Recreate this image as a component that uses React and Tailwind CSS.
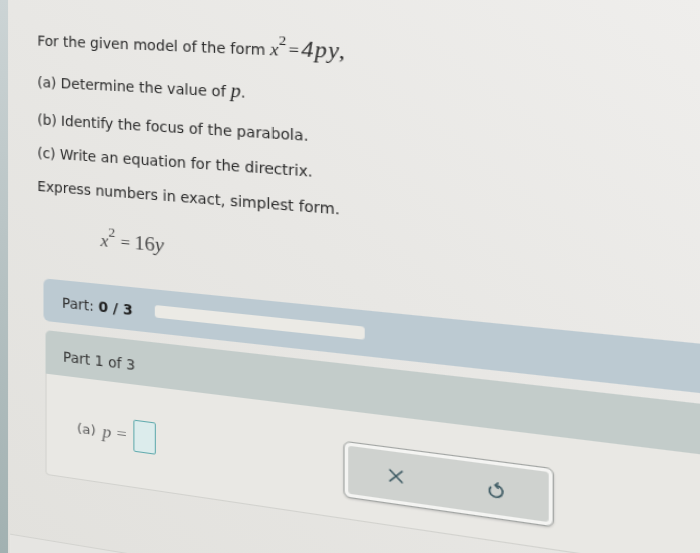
import React from 'react';

const sans = "font-['DejaVu_Sans',Verdana,sans-serif]";
const serif = "font-['Liberation_Serif','Times_New_Roman',serif]";

function UndoIcon() {
  return (
    <svg width="18" height="18" viewBox="0 0 20 20" fill="none" stroke="#3d5a63" strokeWidth="1.7" strokeLinecap="round" strokeLinejoin="round">
      <path d="M9.5 5.5 A5.8 5.8 0 1 1 5 8" />
      <path d="M11.5 3 L9 5.5 L11.5 8" />
    </svg>
  );
}

function CloseIcon() {
  return (
    <svg width="14" height="14" viewBox="0 0 14 14" fill="none" stroke="#3d5a63" strokeWidth="1.5" strokeLinecap="round">
      <path d="M2 2 L12 12 M12 2 L2 12" />
    </svg>
  );
}

export default function App() {
  return (
    <div className="w-[700px] h-[553px] overflow-hidden bg-gradient-to-bl from-[#efeeec] via-[#e8e7e4] to-[#e2e1dd]">
      <div className="w-[640px] h-[600px] flex origin-top-left [transform:matrix3d(1,0.0303,0,-0.0002525,0,1,0,0,0,0,1,0,0,0,0,1)]">
        {/* screen edge */}
        <div className="w-[8px] shrink-0 bg-gradient-to-b from-[#ccd4d5] via-[#b4c0c1] to-[#9eaeae]" />

        <div className="flex-1 flex flex-col">
          {/* question text */}
          <div className={`ml-[29px] pt-[27px] text-[13.3px] text-[#2a2a2a] ${sans}`}>
            <div className="h-[20px] flex items-baseline leading-[20px] whitespace-nowrap">
              <span>For the given model of the form&nbsp;</span>
              <span className={`${serif} italic text-[17px] leading-none`}>x</span>
              <span className={`${serif} text-[13px] leading-none relative -top-[10px]`}>2</span>
              <span className={`${serif} text-[16px] leading-none ml-[2px]`}>=</span>
              <span className={`${serif} italic text-[21px] leading-none ml-[2px] tracking-[1px]`}>4py,</span>
            </div>
            <div className="mt-[23px] h-[20px] flex items-baseline leading-[20px] whitespace-nowrap">
              <span>(a) Determine the value of&nbsp;</span>
              <span className={`${serif} italic text-[18px] leading-none`}>p</span>
              <span>.</span>
            </div>
            <div className="mt-[18px] h-[20px] leading-[20px] whitespace-nowrap">(b) Identify the focus of the parabola.</div>
            <div className="mt-[13px] h-[20px] leading-[20px] whitespace-nowrap">(c) Write an equation for the directrix.</div>
            <div className="mt-[13px] h-[20px] leading-[20px] whitespace-nowrap">Express numbers in exact, simplest form.</div>
            <div className={`mt-[27px] pl-[61px] h-[20px] flex items-baseline whitespace-nowrap text-[#4a4a4a] ${serif}`}>
              <span className="italic text-[17px] leading-none">x</span>
              <span className="text-[13px] leading-none relative -top-[10px]">2</span>
              <span className="text-[16px] leading-none ml-[5px]">=</span>
              <span className="text-[19px] leading-none ml-[4px]">16</span>
              <span className="italic text-[19px] leading-none">y</span>
            </div>
          </div>

          {/* progress bar */}
          <div className={`mt-[33px] ml-[34.5px] h-[42px] rounded-l-[6px] bg-[#bccad2] flex items-center pl-[18.5px] text-[13.3px] text-[#2f2f2f] ${sans}`}>
            <span className="whitespace-nowrap pt-[4px]">
              Part: <span className="font-bold text-[#1f1f1f]">0 / 3</span>
            </span>
            <div className="ml-[20px] w-[185px] h-[11.5px] rounded-[3px] bg-[#ebeae5]" />
          </div>

          {/* part header */}
          <div className={`mt-[9px] ml-[36.5px] h-[43px] rounded-t-[5px] bg-[#c3ccca] flex items-center pl-[17.5px] pt-[6px] text-[13.3px] text-[#363636] ${sans}`}>
            Part 1 of 3
          </div>

          {/* answer card */}
          <div className="ml-[36.5px] h-[100px] border-x border-b border-[#d2d2ce] rounded-b-[4px] bg-[#e9e8e4] flex items-start">
            <div className="w-[270px] shrink-0 pl-[30px] mt-[34px] h-[31px] flex items-center">
              <span className={`text-[13px] text-[#5e5e5e] ${sans}`}>(a)</span>
              <span className={`${serif} italic text-[17px] text-[#666] ml-[6px]`}>p</span>
              <span className={`${serif} text-[17px] text-[#777] ml-[5px]`}>=</span>
              <div className="ml-[6px] w-[21px] h-[31px] rounded-[2px] border-[1.5px] border-[#62abae] bg-[#dcecec]" />
            </div>
            <div className="mt-[28px] w-[170px] h-[52px] rounded-[6px] border border-[#a2a5a3] bg-[#f4f4f2] p-[3px] shadow-[0_1px_2px_rgba(0,0,0,0.15)]">
              <div className="h-full rounded-[3px] bg-[#cfd2cf] flex">
                <div className="flex-1 flex items-center justify-center">
                  <CloseIcon />
                </div>
                <div className="flex-1 flex items-center justify-center">
                  <UndoIcon />
                </div>
              </div>
            </div>
          </div>

          {/* page bottom */}
          <div className="mt-[64px] ml-[2px] flex-1 border-t border-[#d3d3cf] bg-[#e6e5e2]" />
        </div>
      </div>
    </div>
  );
}
